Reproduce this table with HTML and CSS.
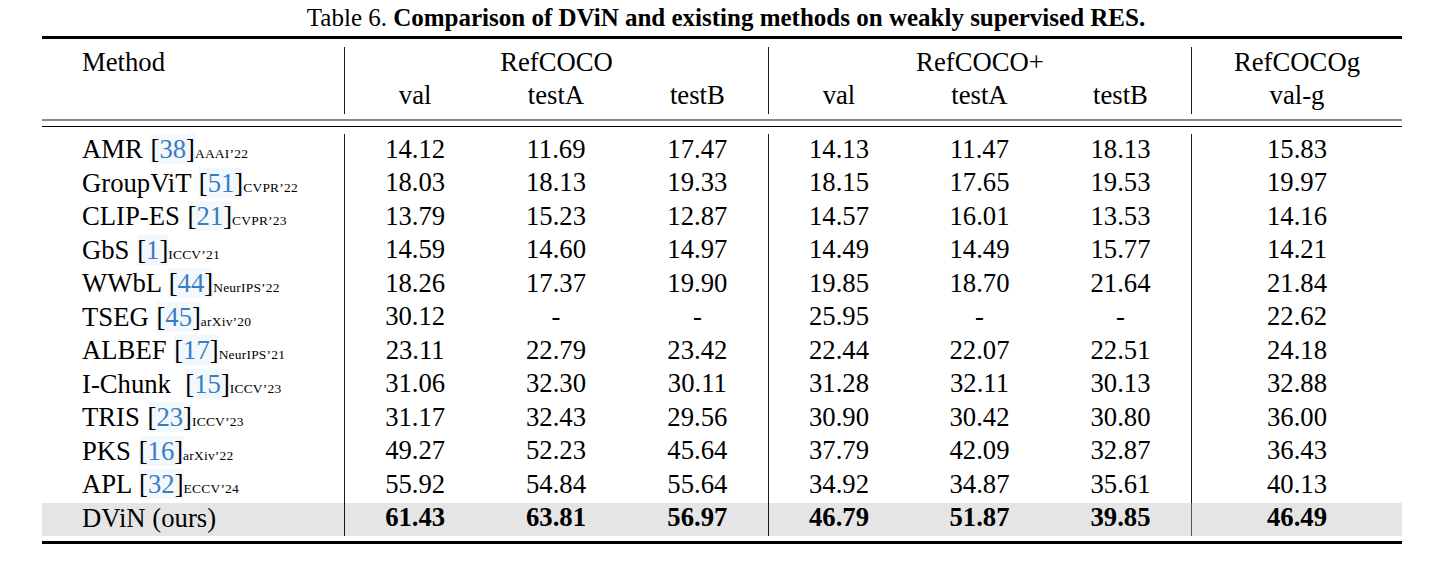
FILE: index.html
```html
<!DOCTYPE html>
<html>
<head>
<meta charset="utf-8">
<link rel="stylesheet" href="styles.css">
</head>
<body>
<div class="paper">
  <div class="caption">Table 6. <b>Comparison of DViN and existing methods on weakly supervised RES.</b></div>
  <div class="rule-thick top"></div>
  <div class="head">
    <div class="c method h1">Method</div>
    <div class="c grp g1 h1 vl">RefCOCO</div>
    <div class="c grp g2 h1 vl">RefCOCO+</div>
    <div class="c grp g3 h1 vl">RefCOCOg</div>
    <div class="c method h2"></div>
    <div class="c h2 vl">val</div>
    <div class="c h2">testA</div>
    <div class="c h2">testB</div>
    <div class="c h2 vl">val</div>
    <div class="c h2">testA</div>
    <div class="c h2">testB</div>
    <div class="c h2 vl">val-g</div>
  </div>
  <div class="rule-gray"></div>
  <div class="rule-black"></div>
  <div class="body">
    <div class="row">
      <div class="c method">AMR <span class="cite">[<span class="ref">38</span>]</span><span class="venue">AAAI’22</span></div>
      <div class="c vl">14.12</div><div class="c">11.69</div><div class="c">17.47</div>
      <div class="c vl">14.13</div><div class="c">11.47</div><div class="c">18.13</div>
      <div class="c vl">15.83</div>
    </div>
    <div class="row">
      <div class="c method">GroupViT <span class="cite">[<span class="ref">51</span>]</span><span class="venue">CVPR’22</span></div>
      <div class="c vl">18.03</div><div class="c">18.13</div><div class="c">19.33</div>
      <div class="c vl">18.15</div><div class="c">17.65</div><div class="c">19.53</div>
      <div class="c vl">19.97</div>
    </div>
    <div class="row">
      <div class="c method">CLIP-ES <span class="cite">[<span class="ref">21</span>]</span><span class="venue">CVPR’23</span></div>
      <div class="c vl">13.79</div><div class="c">15.23</div><div class="c">12.87</div>
      <div class="c vl">14.57</div><div class="c">16.01</div><div class="c">13.53</div>
      <div class="c vl">14.16</div>
    </div>
    <div class="row">
      <div class="c method">GbS <span class="cite">[<span class="ref">1</span>]</span><span class="venue">ICCV’21</span></div>
      <div class="c vl">14.59</div><div class="c">14.60</div><div class="c">14.97</div>
      <div class="c vl">14.49</div><div class="c">14.49</div><div class="c">15.77</div>
      <div class="c vl">14.21</div>
    </div>
    <div class="row">
      <div class="c method">WWbL <span class="cite">[<span class="ref">44</span>]</span><span class="venue">NeurIPS’22</span></div>
      <div class="c vl">18.26</div><div class="c">17.37</div><div class="c">19.90</div>
      <div class="c vl">19.85</div><div class="c">18.70</div><div class="c">21.64</div>
      <div class="c vl">21.84</div>
    </div>
    <div class="row">
      <div class="c method">TSEG <span class="cite">[<span class="ref">45</span>]</span><span class="venue">arXiv’20</span></div>
      <div class="c vl">30.12</div><div class="c">-</div><div class="c">-</div>
      <div class="c vl">25.95</div><div class="c">-</div><div class="c">-</div>
      <div class="c vl">22.62</div>
    </div>
    <div class="row">
      <div class="c method">ALBEF <span class="cite">[<span class="ref">17</span>]</span><span class="venue">NeurIPS’21</span></div>
      <div class="c vl">23.11</div><div class="c">22.79</div><div class="c">23.42</div>
      <div class="c vl">22.44</div><div class="c">22.07</div><div class="c">22.51</div>
      <div class="c vl">24.18</div>
    </div>
    <div class="row">
      <div class="c method">I-Chunk&nbsp; <span class="cite">[<span class="ref">15</span>]</span><span class="venue">ICCV’23</span></div>
      <div class="c vl">31.06</div><div class="c">32.30</div><div class="c">30.11</div>
      <div class="c vl">31.28</div><div class="c">32.11</div><div class="c">30.13</div>
      <div class="c vl">32.88</div>
    </div>
    <div class="row">
      <div class="c method">TRIS <span class="cite">[<span class="ref">23</span>]</span><span class="venue">ICCV’23</span></div>
      <div class="c vl">31.17</div><div class="c">32.43</div><div class="c">29.56</div>
      <div class="c vl">30.90</div><div class="c">30.42</div><div class="c">30.80</div>
      <div class="c vl">36.00</div>
    </div>
    <div class="row">
      <div class="c method">PKS <span class="cite">[<span class="ref">16</span>]</span><span class="venue">arXiv’22</span></div>
      <div class="c vl">49.27</div><div class="c">52.23</div><div class="c">45.64</div>
      <div class="c vl">37.79</div><div class="c">42.09</div><div class="c">32.87</div>
      <div class="c vl">36.43</div>
    </div>
    <div class="row">
      <div class="c method">APL <span class="cite">[<span class="ref">32</span>]</span><span class="venue">ECCV’24</span></div>
      <div class="c vl">55.92</div><div class="c">54.84</div><div class="c">55.64</div>
      <div class="c vl">34.92</div><div class="c">34.87</div><div class="c">35.61</div>
      <div class="c vl">40.13</div>
    </div>
    <div class="row ours">
      <div class="c method">DViN (ours)</div>
      <div class="c vl b">61.43</div><div class="c b">63.81</div><div class="c b">56.97</div>
      <div class="c vl b">46.79</div><div class="c b">51.87</div><div class="c b">39.85</div>
      <div class="c vl vl-gray b">46.49</div>
    </div>
  </div>
  <div class="rule-thick bottom"></div>
</div>
</body>
</html>
```

FILE: styles.css
```css
html, body {
  margin: 0;
  padding: 0;
  background: #ffffff;
}

body {
  font-family: "Liberation Serif", "Times New Roman", serif;
  color: #000000;
}

.paper {
  width: 1360px;
  margin-left: 42px;
  display: flex;
  flex-direction: column;
}

.caption {
  font-size: 25px;
  line-height: 30px;
  padding-top: 3px;
  text-align: center;
  white-space: nowrap;
  margin-left: 8px;
}

.caption b {
  font-weight: bold;
}

.rule-thick {
  height: 3px;
  background: #000000;
}

.rule-thick.top {
  margin-top: 3px;
}

.rule-thick.bottom {
  margin-top: 5px;
}

.head,
.row {
  display: grid;
  grid-template-columns: 302px 141.33px 141.33px 141.34px 141px 141px 141px 211px;
  font-size: 26.7px;
}

.head {
  margin-top: 8px;
  grid-template-rows: 33.5px 33.5px;
}

.grp.g1 { grid-column: 2 / span 3; }
.grp.g2 { grid-column: 5 / span 3; }
.grp.g3 { grid-column: 8 / span 1; }

.c {
  display: flex;
  align-items: center;
  justify-content: center;
  white-space: nowrap;
  line-height: 33.5px;
  height: 33.5px;
  box-sizing: border-box;
  padding-bottom: 3px;
}

.c.method {
  display: block;
  line-height: 30.5px;
  padding-left: 40px;
}

.vl {
  border-left: 1px solid #1a1a1a;
}

.vl-gray {
  border-left-color: #555555;
}

.rule-gray {
  margin-top: 5px;
  height: 2px;
  background: #8a8a8a;
}

.rule-black {
  margin-top: 5px;
  height: 1px;
  background: #000000;
}

.body {
  margin-top: 7px;
  display: flex;
  flex-direction: column;
}

.row {
  height: 33.5px;
}

.row.ours {
  background: #e5e5e5;
  height: 33px;
}

.row.ours .c {
  height: 33px;
}

.row.ours .c.method {
  line-height: 30px;
}

.b {
  font-weight: bold;
}

.cite {
  background: #f3f8fd;
  margin-left: 1px;
}

.ref {
  color: #3a7cc2;
}

.venue {
  font-size: 13.5px;
  letter-spacing: 0.2px;
}
```
